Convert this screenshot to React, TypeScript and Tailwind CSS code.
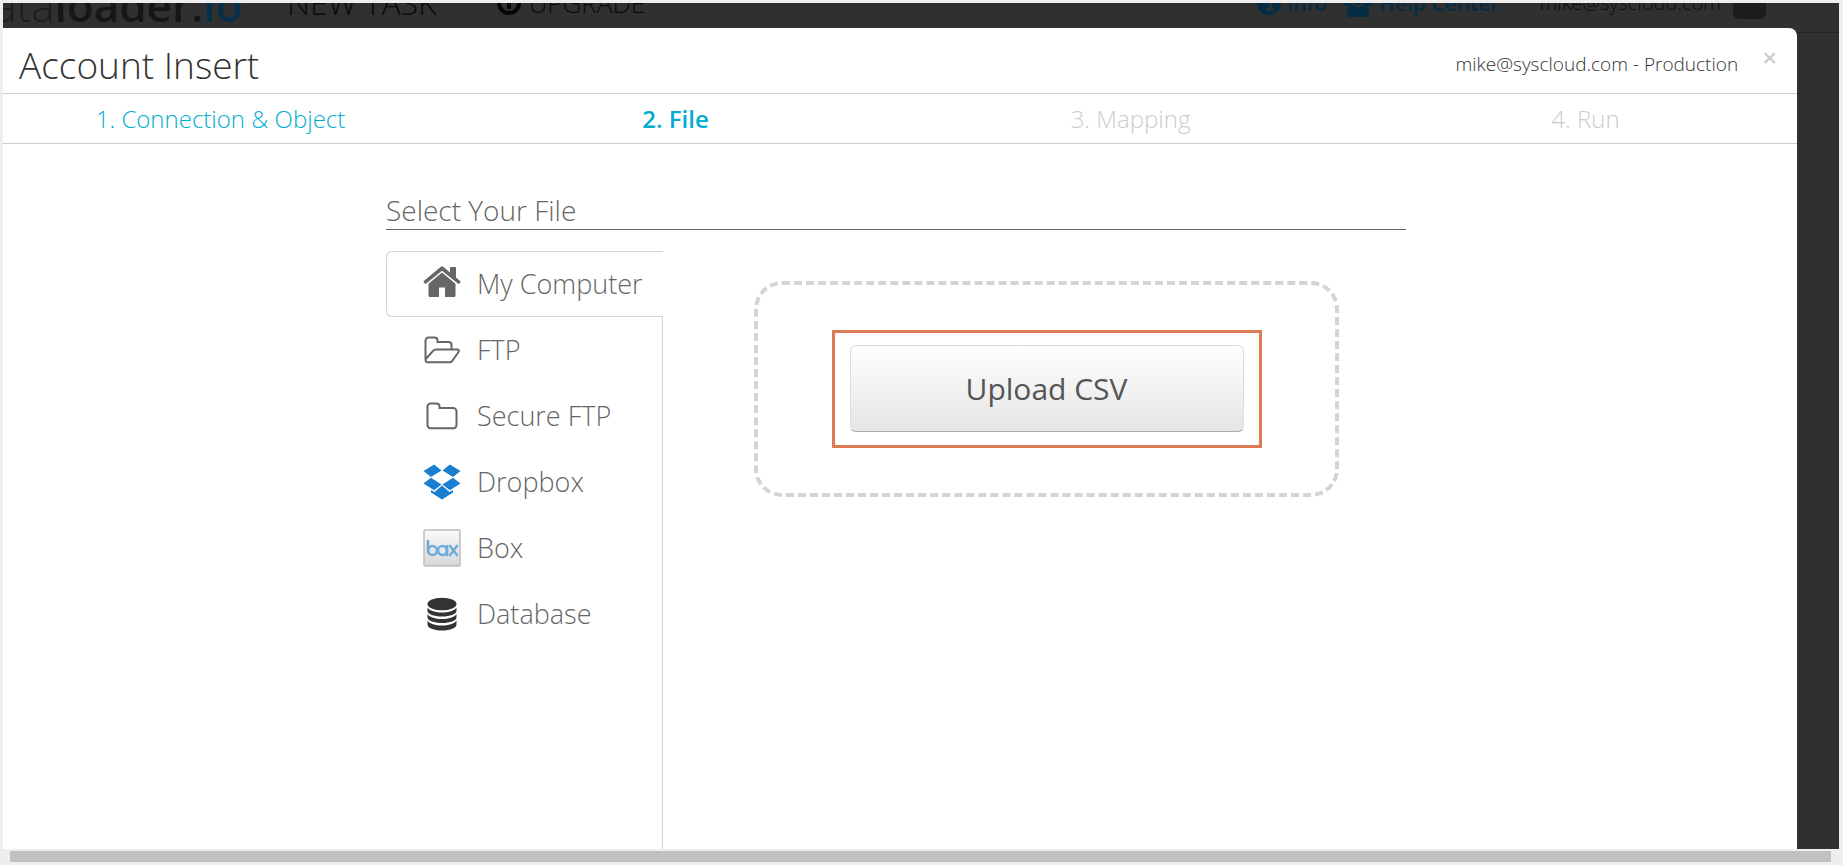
import { useState } from 'react';

const steps = ['1. Connection & Object', '2. File', '3. Mapping', '4. Run'];

function HomeIcon() {
    return (
        <svg viewBox="0 0 38 32" className="w-[38px] h-8 -mt-1 fill-[#666]">
            <path d="M19 .6c.9 0 1.500.3 2.100.8l5.900 5V2c0-.6.4-1 1-1h4c.6 0 1 .4 1 1v9.400l4.200 3.600c.4.400.5.9.1 1.400l-1 1.100c-.4.5-1 .5-1.400.1L19 4.700 3.200 17.600c-.4.400-1 .3-1.400-.1l-1-1.100c-.4-.5-.3-1 .1-1.400L16.900 1.400c.6-.5 1.200-.8 2.100-.8z" />
            <path d="M19 6.500l13.500 11.200v11.800c0 .9-.6 1.500-1.500 1.500h-9V21.500h-6V31H7c-.9 0-1.500-.6-1.500-1.500V17.700z" />
        </svg>
    );
}

function OpenFolderIcon() {
    return (
        <svg viewBox="0 0 36 28" className="w-9 h-7 fill-none stroke-[#666] stroke-2">
            <path d="M1.500 24V4.500a3 3 0 0 1 3-3h6a3 3 0 0 1 3 3v1.500h11a3 3 0 0 1 3 3v4.500M1.500 24a2.500 2.500 0 0 0 2.500 2.300h21.500c1 0 2-.5 2.700-1.300l6-8.500c1.200-1.700.6-3-1.200-3H12c-1.200 0-2.200.5-2.900 1.300L1.800 23" />
        </svg>
    );
}

function FolderIcon() {
    return (
        <svg viewBox="0 0 32 28" className="w-8 h-7 fill-none stroke-[#666] stroke-2">
            <path d="M1.500 4.500a3 3 0 0 1 3-3h6a3 3 0 0 1 3 3v1.500H27a3.500 3.500 0 0 1 3.500 3.500V23a3.300 3.300 0 0 1-3.500 3.300H5A3.300 3.300 0 0 1 1.500 23z" />
        </svg>
    );
}

function DropboxIcon() {
    return (
        <svg viewBox="0 0 38 36" className="w-[38px] h-9 fill-[#1a7fd0]">
            <path d="M11.200 0.500L18.500 6.500 8 13 0.500 7z" />
            <path d="M26.800 0.500L19.500 6.500 30 13 37.500 7z" />
            <path d="M8 13.800L18.500 20.500 11.200 26.300 0.500 19.500z" />
            <path d="M30 13.800L19.500 20.500 26.800 26.300 37.500 19.500z" />
            <path d="M19 21.500L26.500 28 30 26V28.500L19 35.500 8 28.500V26L11.500 28z" />
        </svg>
    );
}

function BoxIcon() {
    return (
        <svg viewBox="0 0 38 38" className="w-[38px] h-[38px]">
            <defs>
                <linearGradient id="boxTile" x1="0" y1="0" x2="0" y2="1">
                    <stop offset="0" stopColor="#fafafa" />
                    <stop offset="1" stopColor="#d8d8d8" />
                </linearGradient>
            </defs>
            <rect x="1" y="1" width="36" height="36" rx="1" fill="url(#boxTile)" stroke="#bdbdbd" strokeWidth="1.500" />
            <g fill="none" stroke="#6facd9" strokeWidth="2.600" strokeLinecap="round">
                <path d="M5 12V21.500" />
                <circle cx="9.500" cy="21.500" r="4.500" />
                <circle cx="19.500" cy="21.500" r="4.500" />
                <path d="M24 17V26M27 17L34 26M34 17L27 26" />
            </g>
        </svg>
    );
}

function DatabaseIcon() {
    return (
        <svg viewBox="0 0 30 34" className="w-[30px] h-[34px] fill-[#333]">
            <ellipse cx="15" cy="7" rx="14.500" ry="6.300" />
            <path d="M.5 10.500c2 3.500 8 5 14.500 5s12.500-1.500 14.500-5v3.500c0 3-6.500 5.500-14.500 5.500S.5 17 .5 14z" />
            <path d="M.5 17c2 3.500 8 5 14.500 5s12.500-1.500 14.500-5v3.500c0 3-6.500 5.500-14.500 5.500S.5 23.500.5 20.500z" />
            <path d="M.5 23.500c2 3.500 8 5 14.500 5s12.500-1.500 14.500-5v4c0 3.500-6.500 6-14.500 6S.5 31 .5 27.500z" />
        </svg>
    );
}

const sources = [
    { name: 'My Computer', icon: <HomeIcon /> },
    { name: 'FTP', icon: <OpenFolderIcon /> },
    { name: 'Secure FTP', icon: <FolderIcon /> },
    { name: 'Dropbox', icon: <DropboxIcon /> },
    { name: 'Box', icon: <BoxIcon /> },
    { name: 'Database', icon: <DatabaseIcon /> },
];

// page header that stays dimmed behind the dialog, scrolled partly out of view
function SiteHeader() {
    return (
        <header className="absolute inset-x-0 top-0 h-[30px] border-b border-[#222] overflow-hidden whitespace-nowrap">
            <div className="flex items-start justify-between -mt-4 pr-[73px] leading-8">
                <div className="flex items-start">
                    <span className="w-[320px] -ml-9 text-[44px] leading-9 text-[#161616] font-semibold">
                        <span className="font-light text-[#1c1c1c]">data</span>loader.<span className="text-[#06304a]">io</span>
                    </span>
                    <a href="#new" className="text-[32px] leading-8 font-light text-[#0a0a0a]">NEW TASK</a>
                    <a href="#upgrade" className="flex items-start gap-2 ml-[60px] text-[26px] leading-8 font-light text-[#0a0a0a]">
                        <svg viewBox="0 0 24 24" className="w-6 h-6 mt-1 fill-none stroke-[#050505] stroke-[4]">
                            <circle cx="12" cy="12" r="10" />
                            <path d="M12 18V7M7 11l5-5 5 5" />
                        </svg>
                        UPGRADE
                    </a>
                </div>
                <div className="flex items-start text-[21px] leading-8 font-semibold text-[#042c44]">
                    <a href="#info" className="flex items-start gap-1.5">
                        <svg viewBox="0 0 24 24" className="w-6 h-6 mt-1">
                            <circle cx="12" cy="12" r="12" className="fill-[#042c44]" />
                            <path d="M9 10h4.500v8M9 18.500h7M11 5.500h3" className="fill-none stroke-[#303030] stroke-[3]" />
                        </svg>
                        Info
                    </a>
                    <a href="#help" className="flex items-start gap-1.5 ml-4">
                        <svg viewBox="0 0 30 28" className="w-[30px] h-7 mt-0.5 fill-[#042c44]">
                            <circle cx="5" cy="8" r="4" />
                            <circle cx="25" cy="8" r="4" />
                            <circle cx="15" cy="10" r="6" />
                            <path d="M0 13h8l2 4H2q-2 0-2-2zM30 13h-8l-2 4h8q2 0 2-2z" />
                            <path d="M4 25c0-6 2-9 5-9q6 4 12 0c3 0 5 3 5 9q0 3-3 3H7q-3 0-3-3z" />
                        </svg>
                        Help Center
                    </a>
                    <span className="ml-10 text-xl leading-8 font-light text-[#0c0c0c]">mike@syscloud.com</span>
                    <span className="w-[33px] h-8 ml-3 bg-[#1d1d1d] rounded-md" />
                </div>
            </div>
        </header>
    );
}

export default function App() {
    const [source, setSource] = useState('My Computer');

    return (
        <div className="flex flex-col h-screen pt-[3px] pl-[3px] pr-1 bg-[#eee] font-['Open_Sans',sans-serif] overflow-hidden">
            <div className="relative flex flex-col flex-1 min-h-0 pt-[25px] pr-[42px] bg-[#303030]">
                <SiteHeader />

                <main className="relative flex flex-col flex-1 min-h-0 bg-white rounded-tr-lg overflow-hidden">
                    <div className="flex items-center justify-between h-[65px] pt-2 pl-4 pr-5 shrink-0">
                        <h1 className="text-[37px] leading-10 font-light text-[#333]">Account Insert</h1>
                        <div className="flex items-center gap-6">
                            <p className="text-[19px] font-light text-[#333]">mike@syscloud.com - Production</p>
                            <button type="button" aria-label="Close" className="pb-4 text-[26px] font-semibold leading-5 text-[#ccc]">×</button>
                        </div>
                    </div>

                    <nav className="border-y border-[#ccc] shrink-0">
                        <ol className="flex -ml-2.5 -mr-4">
                            {steps.map((step, i) => (
                                <li
                                    key={step}
                                    className={`flex-1 text-center text-2xl leading-[49px] ${i === 0 ? 'font-light text-[#00aed2]' : i === 1 ? 'font-semibold text-[#00aed2]' : 'font-light text-[#ccc]'}`}
                                >
                                    {step}
                                </li>
                            ))}
                        </ol>
                    </nav>

                    <div className="flex flex-1 justify-center pt-12 pr-2">
                        <section className="flex flex-col w-[1020px]">
                            <h2 className="pb-px text-[28px] leading-9 font-light text-[#666] border-b border-[#666]">Select Your File</h2>
                            <div className="flex flex-1 mt-[21px]">
                                <div className="flex flex-col w-[277px]">
                                    {sources.map((item) => (
                                        <button
                                            key={item.name}
                                            type="button"
                                            onClick={() => setSource(item.name)}
                                            className={`flex items-center h-[66px] pl-9 gap-4 text-[27px] font-light text-[#666] ${source === item.name ? 'border border-r-0 border-[#d5d5d5] rounded-l-md' : 'border-r border-l border-l-transparent border-[#d5d5d5]'}`}
                                        >
                                            <span className="flex justify-center w-[38px]">{item.icon}</span>
                                            {item.name}
                                        </button>
                                    ))}
                                    <div className="flex-1 border-r border-[#d5d5d5]" />
                                </div>
                                <div className="flex items-center justify-center w-[585px] h-[216px] mt-[30px] ml-[91px] border-4 border-dashed border-[#d4d4d4] rounded-[28px]">
                                    <div className="px-[15px] pt-3 pb-[13px] border-[3px] border-[#de7b57]">
                                        <button
                                            type="button"
                                            className="block w-[394px] h-[87px] text-[30px] text-[#555] bg-linear-to-b from-white to-[#e5e5e5] border border-[#ddd] border-b-[#aaa] rounded-md"
                                        >
                                            Upload CSV
                                        </button>
                                    </div>
                                </div>
                            </div>
                        </section>
                    </div>
                </main>
            </div>

            <div className="h-4 pt-0.5 pl-[7px] pr-2 shrink-0">
                <div className="h-[11px] bg-[#c1c1c1]" />
            </div>
        </div>
    );
}
